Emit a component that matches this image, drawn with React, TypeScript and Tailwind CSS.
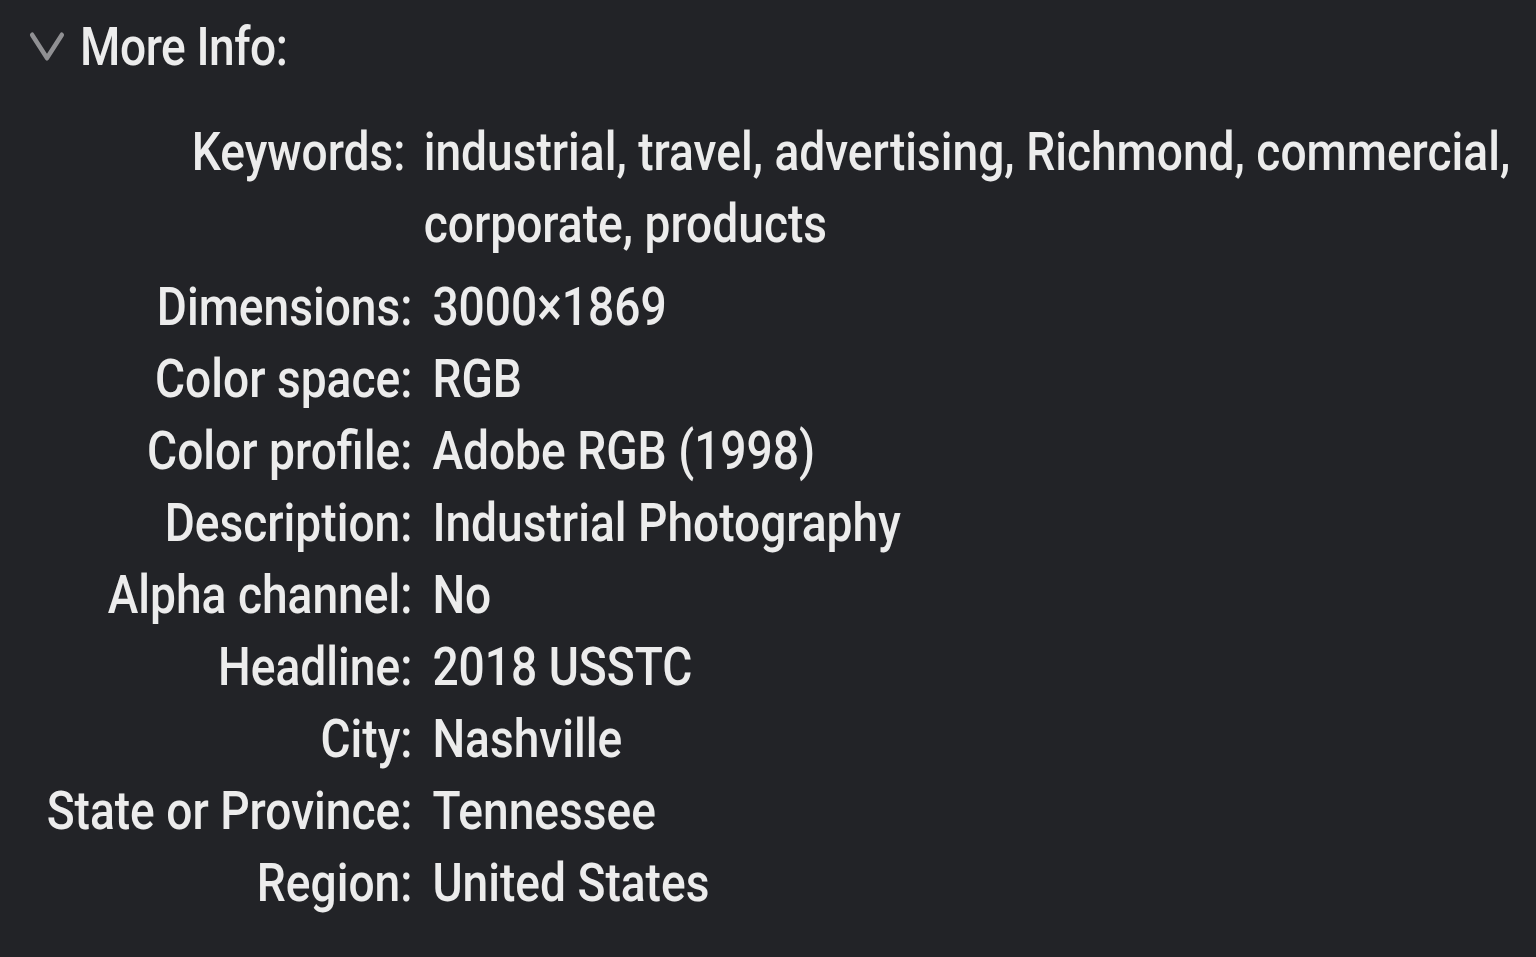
import React from "react";

const rows: [string, string][] = [
  ["Dimensions:", "3000\u00d71869"],
  ["Color space:", "RGB"],
  ["Color profile:", "Adobe RGB (1998)"],
  ["Description:", "Industrial Photography"],
  ["Alpha channel:", "No"],
  ["Headline:", "2018 USSTC"],
  ["City:", "Nashville"],
  ["State or Province:", "Tennessee"],
  ["Region:", "United States"],
];

export default function App() {
  return (
    <div className="min-h-screen w-full overflow-hidden bg-[#222327]">
      <div
        className="w-[1766px] origin-top-left scale-x-[0.87] text-[53px] leading-[72px] font-medium text-[#ececec] antialiased"
        style={{ fontFamily: "Roboto, 'Noto Sans', sans-serif" }}
      >
        <div className="flex items-center pt-[11px]">
          <div className="ml-[33px] flex h-[72px] w-[42px] items-center justify-center">
            <svg width="40" height="30" viewBox="0 0 40 30" fill="none">
              <path d="M3 3 L20 26 L37 3" stroke="#909093" strokeWidth="5" strokeLinecap="round" strokeLinejoin="round" />
            </svg>
          </div>
          <div className="ml-[17px] tracking-[-0.5px]">More Info:</div>
        </div>

        <div className="mt-[33px] flex">
          <div className="w-[466px] shrink-0 text-right">Keywords:</div>
          <div className="ml-[21px] w-[1260px]">
            industrial, travel, advertising, Richmond, commercial, corporate, products
          </div>
        </div>

        <div className="mt-[11px] flex flex-col">
          {rows.map(([label, value]) => (
            <div key={label} className="flex">
              <div className="w-[474px] shrink-0 whitespace-nowrap text-right">{label}</div>
              <div className="ml-[23px] whitespace-nowrap">{value}</div>
            </div>
          ))}
        </div>
      </div>
    </div>
  );
}
